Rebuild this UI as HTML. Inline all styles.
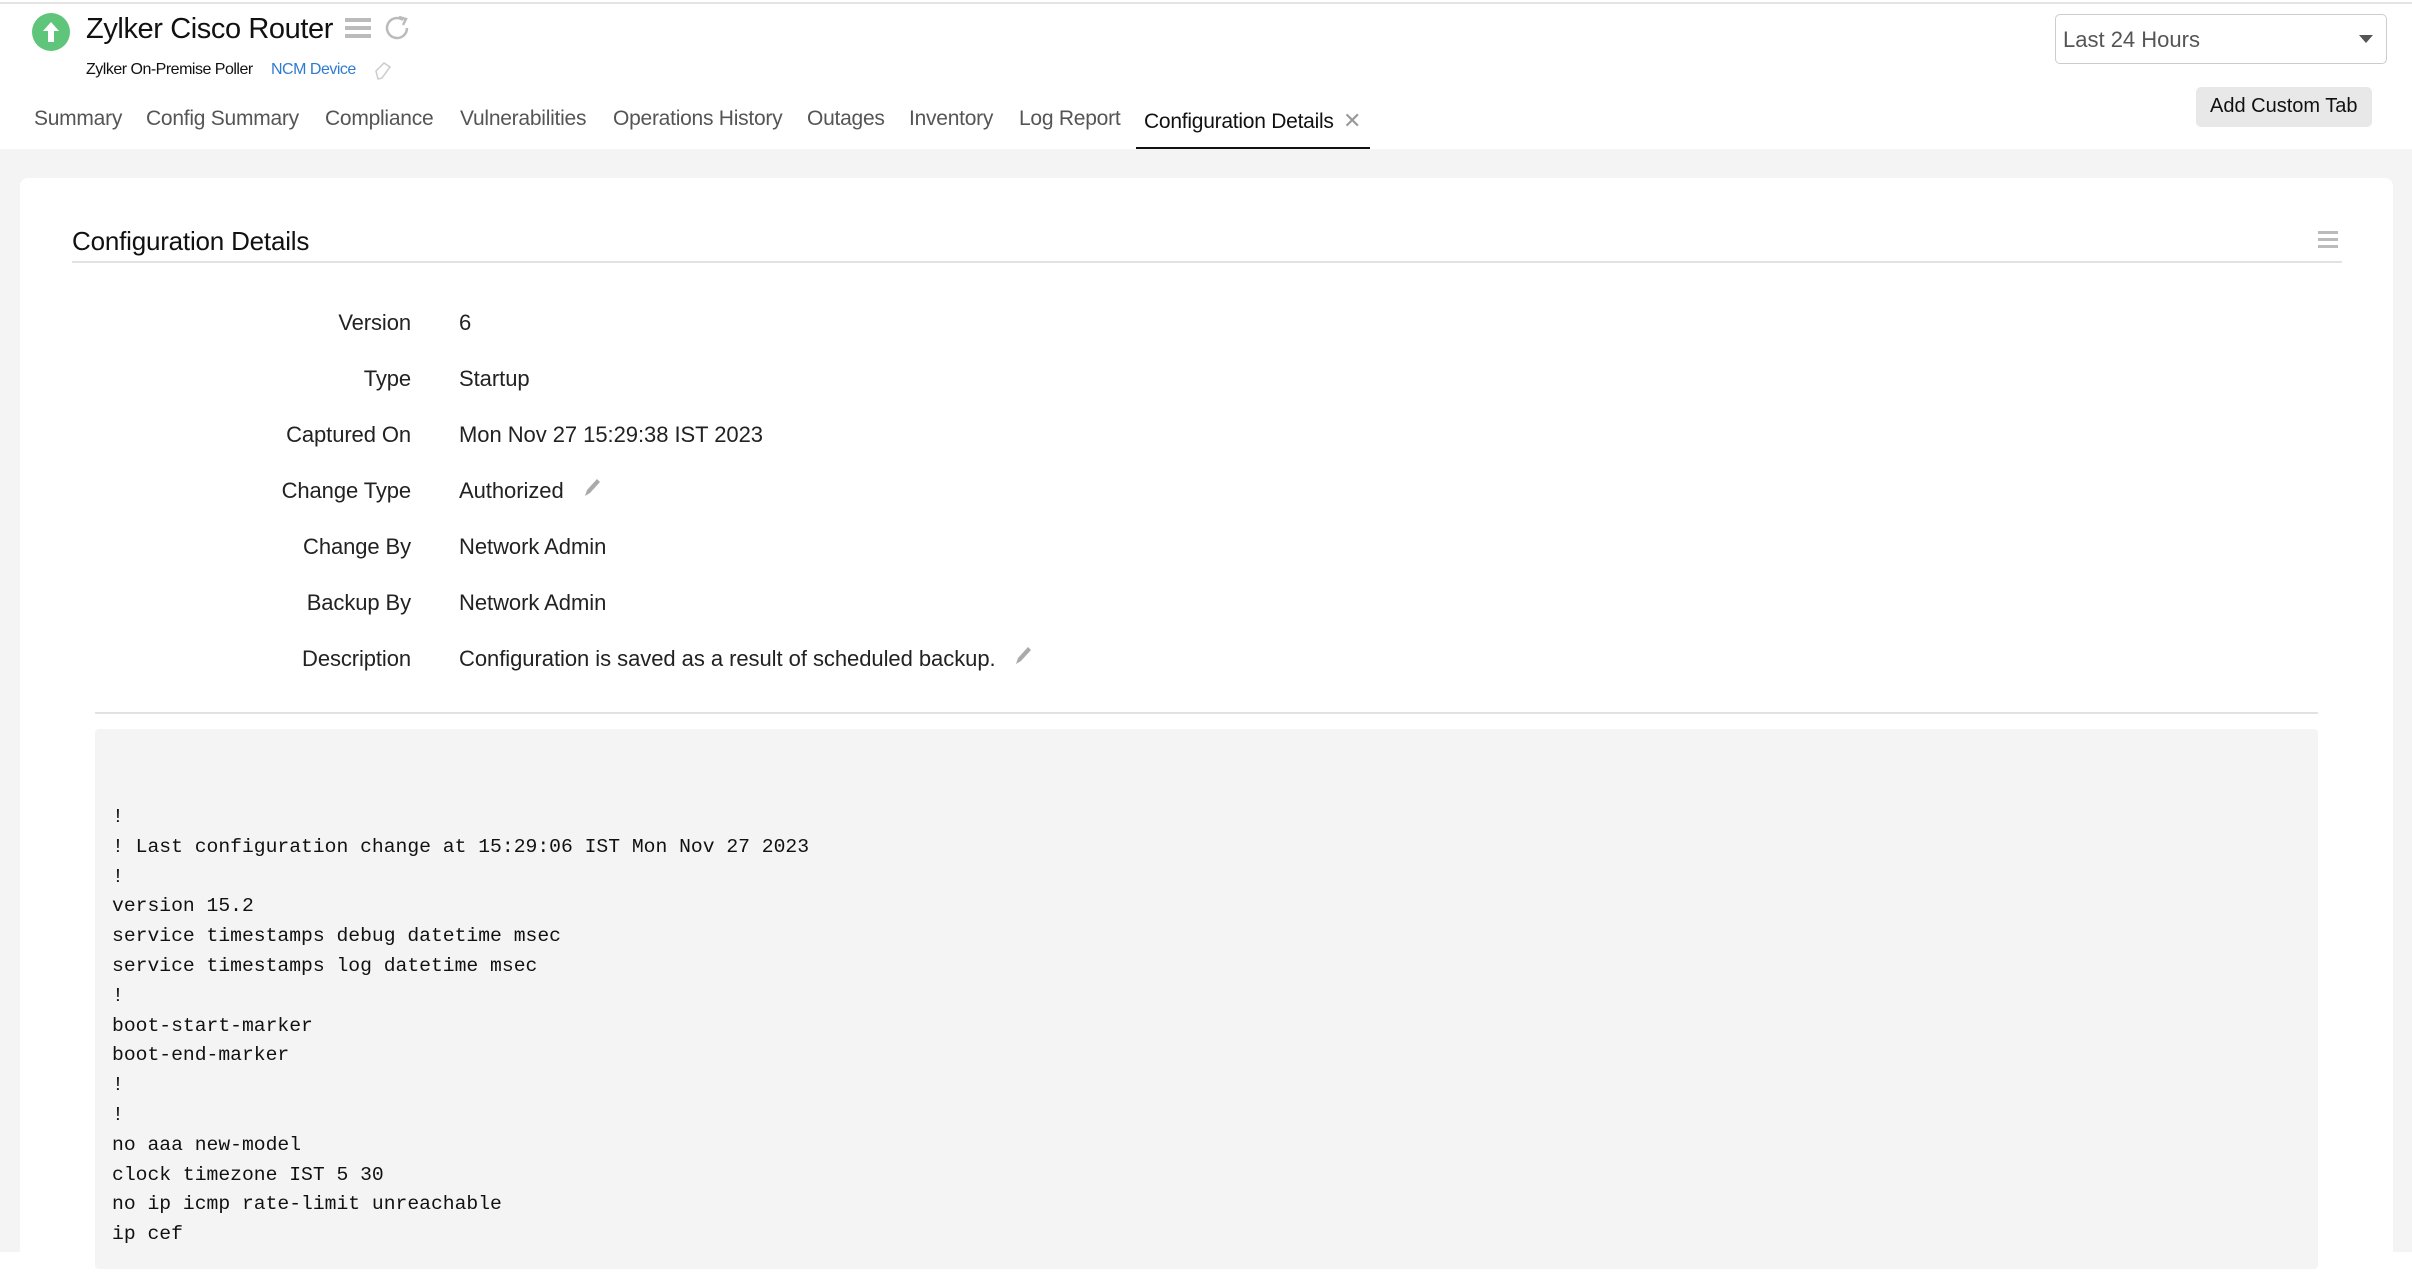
<!DOCTYPE html>
<html><head><meta charset="utf-8"><style>
*{margin:0;padding:0;box-sizing:border-box}
body{width:2412px;height:1252px;overflow:hidden;background:#fff;font-family:"Liberation Sans",sans-serif;color:#222;position:relative}
.a{position:absolute;white-space:nowrap}
.tab{position:absolute;top:107px;font-size:21px;color:#555;letter-spacing:-0.25px}
.lbl{position:absolute;right:2001px;font-size:22px;color:#222;letter-spacing:-0.1px}
.val{position:absolute;left:459px;font-size:22px;color:#222;letter-spacing:-0.05px}
pre{font-family:"Liberation Mono",monospace;font-size:19.7px;line-height:29.8px;color:#111;white-space:pre!important}
</style></head><body>
<div class="a" style="left:0;top:2px;width:2412px;height:2px;background:#e4e4e4"></div>
<div class="a" style="left:32px;top:13px;width:38px;height:38px;border-radius:50%;background:#5ec57a"></div>
<svg class="a" style="left:32px;top:13px" width="38" height="38" viewBox="0 0 38 38"><path d="M19 9 L27 18 H22 V29 H16 V18 H11 Z" fill="#fff"/></svg>
<div class="a" style="left:86px;top:13px;font-size:29px;color:#111;letter-spacing:-0.4px">Zylker Cisco Router</div>
<svg class="a" style="left:345px;top:16px" width="26" height="24"><rect x="0" y="2" width="26" height="4" fill="#bbb"/><rect x="0" y="10" width="26" height="4" fill="#bbb"/><rect x="0" y="18" width="26" height="4" fill="#bbb"/></svg>
<svg class="a" style="left:383px;top:14px" width="28" height="28" viewBox="0 0 28 28"><path d="M20 6 A10 10 0 1 0 24 14" fill="none" stroke="#bbb" stroke-width="2.5"/><path d="M16 3 L23 5 L20 11" fill="none" stroke="#bbb" stroke-width="2.5"/></svg>
<div class="a" style="left:86px;top:61px;font-size:16px;color:#111;letter-spacing:-0.5px">Zylker On-Premise Poller</div>
<div class="a" style="left:271px;top:61px;font-size:16px;color:#2f7bd0;letter-spacing:-0.5px">NCM Device</div>
<svg class="a" style="left:374px;top:61px" width="18" height="20"><path d="M4 18 L2 10 L10 2 L16 6 L8 17 Z" fill="none" stroke="#ccc" stroke-width="1.5"/></svg>
<div class="tab" style="left:34px">Summary</div>
<div class="tab" style="left:146px">Config Summary</div>
<div class="tab" style="left:325px">Compliance</div>
<div class="tab" style="left:460px">Vulnerabilities</div>
<div class="tab" style="left:613px">Operations History</div>
<div class="tab" style="left:807px">Outages</div>
<div class="tab" style="left:909px">Inventory</div>
<div class="tab" style="left:1019px">Log Report</div>
<div class="tab" style="left:1144px;top:110px;color:#111">Configuration Details</div>
<div class="tab" style="left:1343px;top:108px;color:#999;font-size:22px">✕</div>
<div class="a" style="left:1136px;top:147px;width:234px;height:4px;background:#111"></div>
<div class="a" style="left:2055px;top:14px;width:332px;height:50px;border:1px solid #ccc;border-radius:5px"></div>
<div class="a" style="left:2063px;top:27px;font-size:22px;color:#555">Last 24 Hours</div>
<svg class="a" style="left:2359px;top:35px" width="14" height="9"><path d="M0 0 H14 L7 8 Z" fill="#555"/></svg>
<div class="a" style="left:2196px;top:87px;width:176px;height:40px;background:#e8e8e8;border-radius:5px"></div>
<div class="a" style="left:2210px;top:95px;font-size:20px;color:#111">Add Custom Tab</div>
<div class="a" style="left:0;top:149px;width:2412px;height:1103px;background:#f4f4f4"></div>
<div class="a" style="left:20px;top:178px;width:2373px;height:1100px;background:#fff;border-radius:8px"></div>
<div class="a" style="left:72px;top:226px;font-size:26px;color:#111;letter-spacing:-0.2px">Configuration Details</div>
<svg class="a" style="left:2318px;top:230px" width="20" height="20"><rect y="1" width="20" height="3" fill="#bbb"/><rect y="8" width="20" height="3" fill="#bbb"/><rect y="15" width="20" height="3" fill="#bbb"/></svg>
<div class="a" style="left:72px;top:261px;width:2270px;height:2px;background:#e2e2e2"></div>
<div class="lbl" style="top:310px">Version</div><div class="val" style="top:310px">6</div>
<div class="lbl" style="top:366px">Type</div><div class="val" style="top:366px">Startup</div>
<div class="lbl" style="top:422px">Captured On</div><div class="val" style="top:422px">Mon Nov 27 15:29:38 IST 2023</div>
<div class="lbl" style="top:478px">Change Type</div><div class="val" style="top:478px">Authorized</div>
<svg class="a" style="left:583px;top:478px" width="18" height="20"><path d="M2 18 L4 12 L14 1 L17 4 L7 15 Z" fill="#aaa"/></svg>
<div class="lbl" style="top:534px">Change By</div><div class="val" style="top:534px">Network Admin</div>
<div class="lbl" style="top:590px">Backup By</div><div class="val" style="top:590px">Network Admin</div>
<div class="lbl" style="top:646px">Description</div><div class="val" style="top:646px">Configuration is saved as a result of scheduled backup.</div>
<svg class="a" style="left:1014px;top:646px" width="18" height="20"><path d="M2 18 L4 12 L14 1 L17 4 L7 15 Z" fill="#aaa"/></svg>
<div class="a" style="left:95px;top:712px;width:2223px;height:2px;background:#e2e2e2"></div>
<div class="a" style="left:95px;top:729px;width:2223px;height:540px;background:#f4f4f4;border-radius:4px"></div>
<pre class="a" style="left:112px;top:803px">!
! Last configuration change at 15:29:06 IST Mon Nov 27 2023
!
version 15.2
service timestamps debug datetime msec
service timestamps log datetime msec
!
boot-start-marker
boot-end-marker
!
!
no aaa new-model
clock timezone IST 5 30
no ip icmp rate-limit unreachable
ip cef</pre>
</body></html>
